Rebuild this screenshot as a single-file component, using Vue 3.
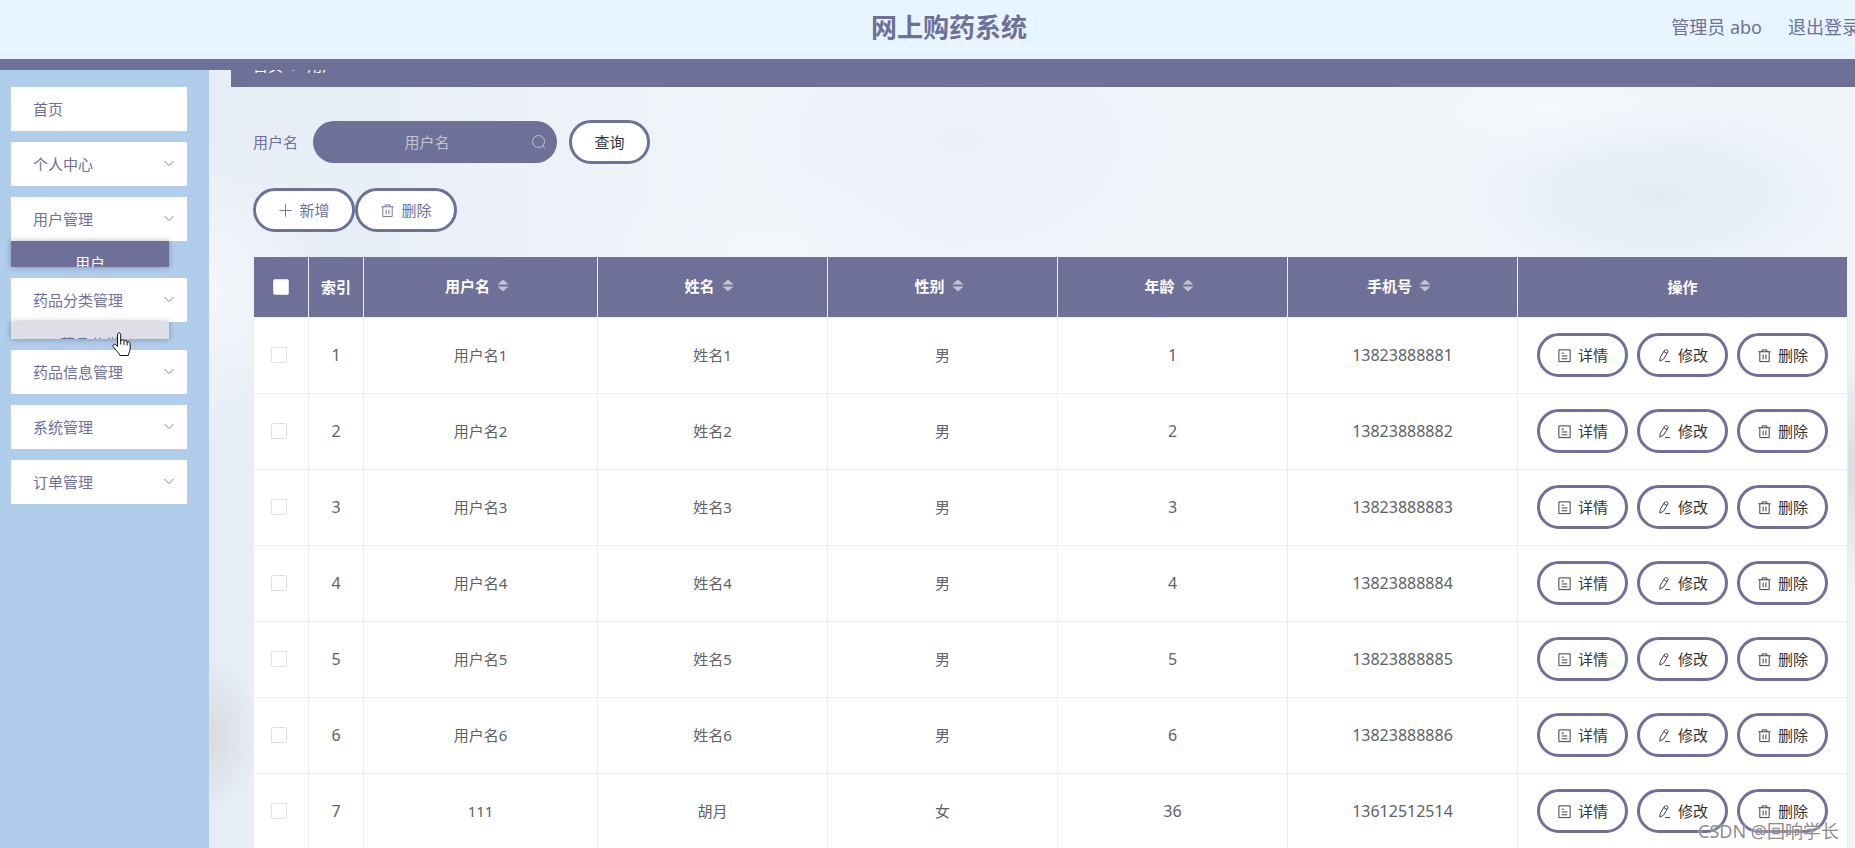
<template>
  <div class="layout">
    <header class="header">
      <h1>网上购药系统</h1>
      <div class="user-info">
        <span>管理员 abo</span>
        <a href="#" @click.prevent>退出登录</a>
      </div>
    </header>

    <div class="body">
      <!-- Menú lateral -->
      <aside class="sidebar">
        <ul class="menu">
          <li v-for="item in menus" :key="item.nombre">
            <button class="menu-item" type="button">
              <span>{{ item.nombre }}</span>
              <svg v-if="item.flecha" class="chevron" viewBox="0 0 12 12">
                <path d="M1.5 3 L6 7.5 L10.5 3" />
              </svg>
            </button>
            <div v-if="item.hijo" class="submenu" :class="item.estado">
              <a href="#" @click.prevent>{{ item.hijo }}</a>
            </div>
          </li>
        </ul>
      </aside>

      <main class="main">
        <nav class="breadcrumb">
          <a href="#" @click.prevent>首页</a>
          <span class="separator">/</span>
          <span>用户</span>
        </nav>

        <div class="content">
          <form class="search-form" @submit.prevent>
            <label for="username">用户名</label>
            <div class="search-box">
              <input id="username" v-model="busqueda" type="text" placeholder="用户名">
              <svg class="search-icon" viewBox="0 0 16 16">
                <circle cx="7.5" cy="7.5" r="6" />
                <path d="M12 12 L14 14" />
              </svg>
            </div>
            <button class="btn btn-query" type="submit">查询</button>
          </form>

          <div class="toolbar">
            <button class="btn" type="button">
              <svg class="icon" viewBox="0 0 16 16"><path d="M8 1.5 V14.5 M1.5 8 H14.5" /></svg>
              新增
            </button>
            <button class="btn" type="button">
              <svg class="icon" viewBox="0 0 16 16"><path :d="iconos.borrar" /></svg>
              删除
            </button>
          </div>

          <!-- Tabla de usuarios -->
          <table class="table">
            <colgroup>
              <col class="col-small">
              <col class="col-small">
              <col class="col-name">
              <col>
              <col>
              <col>
              <col>
              <col class="col-actions">
            </colgroup>
            <thead>
              <tr>
                <th><input v-model="todos" type="checkbox" aria-label="全选"></th>
                <th>索引</th>
                <th v-for="columna in columnas" :key="columna">
                  <div class="sortable">
                    {{ columna }}
                    <svg class="caret" viewBox="0 0 12 14">
                      <path d="M6 0.5 L12 6 H0 Z M0 8 H12 L6 13.5 Z" />
                    </svg>
                  </div>
                </th>
                <th>操作</th>
              </tr>
            </thead>
            <tbody>
              <tr v-for="(fila, indice) in usuarios" :key="fila.telefono">
                <td class="check-cell">
                  <input v-model="fila.marcado" type="checkbox" :aria-label="fila.usuario">
                </td>
                <td class="number">{{ indice + 1 }}</td>
                <td>{{ fila.usuario }}</td>
                <td>{{ fila.nombre }}</td>
                <td>{{ fila.sexo }}</td>
                <td class="number">{{ fila.edad }}</td>
                <td class="number">{{ fila.telefono }}</td>
                <td>
                  <div class="actions">
                    <button v-for="accion in acciones" :key="accion.texto" class="btn" type="button">
                      <svg class="icon" viewBox="0 0 16 16"><path :d="accion.icono" /></svg>
                      {{ accion.texto }}
                    </button>
                  </div>
                </td>
              </tr>
            </tbody>
          </table>
        </div>
      </main>
    </div>

    <svg class="cursor" viewBox="0 0 20 25">
      <path d="M5.5 2.8 C5.5 0.2 8.7 0.2 8.7 2.8 V9 C9.2 7.2 11.8 7.4 12 9.3 C12.8 7.9 15 8.3 15.1 10.2 C16.2 9.2 18.2 9.8 18.2 11.8 V16 C18.2 19 16.8 20.3 16.3 23.5 H7.8 C7.2 20.8 3.2 17.7 1.2 14.7 C0.2 12.8 2.2 11.4 3.7 12.7 L5.5 14.5 Z" />
      <path d="M8.7 8.5 V12.5 M12 9.3 V13 M15.1 10.2 V13.5" />
    </svg>
    <div class="watermark">CSDN @回响学长</div>
  </div>
</template>

<script setup>
import { ref } from 'vue'

const busqueda = ref('')
const todos = ref(false)

// Elementos del menú, algunos con su submenú desplegándose
const menus = [
  { nombre: '首页' },
  { nombre: '个人中心', flecha: true },
  { nombre: '用户管理', flecha: true, hijo: '用户', estado: 'active' },
  { nombre: '药品分类管理', flecha: true, hijo: '药品分类', estado: 'opening' },
  { nombre: '药品信息管理', flecha: true },
  { nombre: '系统管理', flecha: true },
  { nombre: '订单管理', flecha: true }
]

const columnas = ['用户名', '姓名', '性别', '年龄', '手机号']

const iconos = {
  detalle: 'M2 2 H14 V14.5 H2 Z M5 5.5 H7.5 M5 8.5 H11 M5 11.5 H11',
  editar: 'M3.5 10 L8.2 2.2 Q9 1.2 10 1.8 L11.3 2.6 Q12.2 3.3 11.7 4.2 L6.8 12 L3 14 Z M7.5 4 L10.8 6 M8.5 14.5 H14',
  borrar: 'M1.5 4 H14.5 M5.5 4 V2 H10.5 V4 M3 4 V14.5 H13 V4 M6.5 7 V12 M9.5 7 V12'
}

const acciones = [
  { texto: '详情', icono: iconos.detalle },
  { texto: '修改', icono: iconos.editar },
  { texto: '删除', icono: iconos.borrar }
]

const usuarios = ref([
  { usuario: '用户名1', nombre: '姓名1', sexo: '男', edad: 1, telefono: '13823888881', marcado: false },
  { usuario: '用户名2', nombre: '姓名2', sexo: '男', edad: 2, telefono: '13823888882', marcado: false },
  { usuario: '用户名3', nombre: '姓名3', sexo: '男', edad: 3, telefono: '13823888883', marcado: false },
  { usuario: '用户名4', nombre: '姓名4', sexo: '男', edad: 4, telefono: '13823888884', marcado: false },
  { usuario: '用户名5', nombre: '姓名5', sexo: '男', edad: 5, telefono: '13823888885', marcado: false },
  { usuario: '用户名6', nombre: '姓名6', sexo: '男', edad: 6, telefono: '13823888886', marcado: false },
  { usuario: '111', nombre: '胡月', sexo: '女', edad: 36, telefono: '13612512514', marcado: false }
])
</script>

<style>
body {
  margin: 0;
}
</style>

<style scoped>
.layout {
  position: relative;
  display: flex;
  flex-direction: column;
  height: 100vh;
  overflow: hidden;
  font-family: "Noto Sans", "Noto Sans CJK SC", sans-serif;
  font-size: 15px;
  line-height: 22px;
  color: #6e7098;
}

.layout * {
  box-sizing: border-box;
}

a {
  color: inherit;
  text-decoration: none;
}

button,
input {
  font: inherit;
}

/* La cabecera es más ancha que la ventana */
.header {
  flex: none;
  display: grid;
  grid-template-columns: 1fr auto 1fr;
  align-items: center;
  width: calc(100% + 43px);
  height: 70px;
  padding: 0 38px 5px;
  background: #e6f5ff;
  border-bottom: 11px solid #6e7098;
}

.header h1 {
  grid-column: 2;
  margin: 0;
  font-size: 26px;
  line-height: 36px;
  font-weight: bold;
}

.user-info {
  display: flex;
  justify-content: flex-end;
  gap: 26px;
  font-size: 18px;
}

.body {
  flex: 1;
  display: flex;
  min-height: 0;
}

.sidebar {
  flex: none;
  width: 209px;
  padding: 17px 22px 0 11px;
  background: #b0cdec;
}

.menu {
  display: flex;
  flex-direction: column;
  gap: 11px;
  margin: 0;
  padding: 0;
  list-style: none;
}

.menu-item {
  display: flex;
  align-items: center;
  justify-content: space-between;
  width: 100%;
  height: 44px;
  padding: 0 12px 0 22px;
  border: none;
  background: #fff;
  color: #6e7098;
  cursor: pointer;
}

.chevron {
  width: 12px;
  height: 12px;
  fill: none;
  stroke: #7e80a3;
}

.submenu {
  width: 158px;
  overflow: hidden;
  box-shadow: 0 0 6px rgba(0, 0, 0, 0.3);
  text-align: center;
}

.submenu a {
  display: block;
  line-height: 44px;
}

.submenu.active {
  height: 26px;
  background: #6e7098;
  color: #fff;
}

.submenu.opening {
  height: 17px;
  background: #dddee7;
  color: #6e7098;
}

.main {
  flex: 1;
  min-width: 0;
  overflow: hidden;
  background:
    radial-gradient(ellipse 50px 80px at 0 665px, #d8dbdf, transparent),
    radial-gradient(ellipse 80px 120px at 100% 400px, #d9dde3, transparent),
    radial-gradient(ellipse 190px 90px at 1450px 125px, #e0ecf5, transparent),
    radial-gradient(ellipse 200px 60px at 1340px 40px, #f6f8fb, transparent),
    radial-gradient(ellipse 200px 130px at 750px 70px, #ebf0fa, transparent),
    radial-gradient(ellipse 160px 80px at 560px 180px, #f4f7fb, transparent),
    radial-gradient(ellipse 120px 150px at 0 220px, #f4f7fb, transparent),
    linear-gradient(90deg, #e6edf5, #eff4f9 500px);
}

/* Contenido desplazado bajo la cabecera */
.breadcrumb {
  display: flex;
  align-items: center;
  gap: 9px;
  height: 44px;
  margin: -27px 0 0 22px;
  padding: 0 22px;
  background: #6e7098;
  color: #fff;
}

.separator {
  color: #c0c4cc;
  font-weight: bold;
}

.content {
  padding: 33px 7px 0 44px;
}

.search-form {
  display: flex;
  align-items: center;
}

.search-box {
  position: relative;
  width: 244px;
  margin: 0 12px 0 15px;
}

.search-box input {
  display: block;
  width: 100%;
  height: 42px;
  padding: 0 33px 0 17px;
  border: none;
  border-radius: 21px;
  outline: none;
  background: #6e7098;
  color: #fff;
  text-align: center;
}

.search-box input::placeholder {
  color: #c0c4cc;
  opacity: 1;
}

.search-icon {
  position: absolute;
  top: 13px;
  right: 10px;
  width: 16px;
  height: 16px;
  fill: none;
  stroke: #c0c4cc;
}

.btn {
  display: inline-flex;
  align-items: center;
  justify-content: center;
  gap: 6px;
  height: 44px;
  padding: 0 17px;
  border: 3px solid #6e7098;
  border-radius: 22px;
  background: #fff;
  color: #333;
  cursor: pointer;
}

.btn-query {
  min-width: 81px;
}

.icon {
  width: 15px;
  height: 15px;
  fill: none;
  stroke: currentColor;
}

.toolbar {
  display: flex;
  margin: 24px 0 25px;
}

.toolbar .btn {
  min-width: 102px;
  color: #6e7098;
}

.table {
  width: 100%;
  table-layout: fixed;
  border-collapse: collapse;
  background: #fff;
  color: #606266;
  text-align: center;
}

.col-small {
  width: 55px;
}

.col-name {
  width: 234px;
}

.col-actions {
  width: 330px;
}

.table th,
.table td {
  padding: 0;
  border: 1px solid #ebeef5;
}

.table th {
  height: 60px;
  border-top: none;
  background: #6e7098;
  color: #fff;
  font-weight: bold;
}

.table td {
  height: 76px;
}

.table .number {
  font-size: 16px;
}

.sortable {
  display: flex;
  align-items: center;
  justify-content: center;
  padding-bottom: 2px;
}

.caret {
  width: 26px;
  height: 13px;
  fill: #c0c4cc;
}

.table input {
  display: block;
  appearance: none;
  width: 16px;
  height: 16px;
  margin: 0 auto;
  border: 1px solid #dcdfe6;
  border-radius: 2px;
  background: #fff;
}

.table input:checked {
  background: #409eff;
}

.table .check-cell {
  padding-right: 4px;
}

.actions {
  display: flex;
  justify-content: center;
  gap: 9px;
}

.cursor {
  position: absolute;
  left: 112px;
  top: 332px;
  width: 20px;
  height: 25px;
  fill: #fff;
  stroke: #111;
  stroke-linejoin: round;
}

.watermark {
  position: absolute;
  right: 16px;
  bottom: 6px;
  color: rgba(110, 110, 110, 0.8);
  font-size: 18px;
  text-shadow: 0 0 2px #fff;
}
</style>
